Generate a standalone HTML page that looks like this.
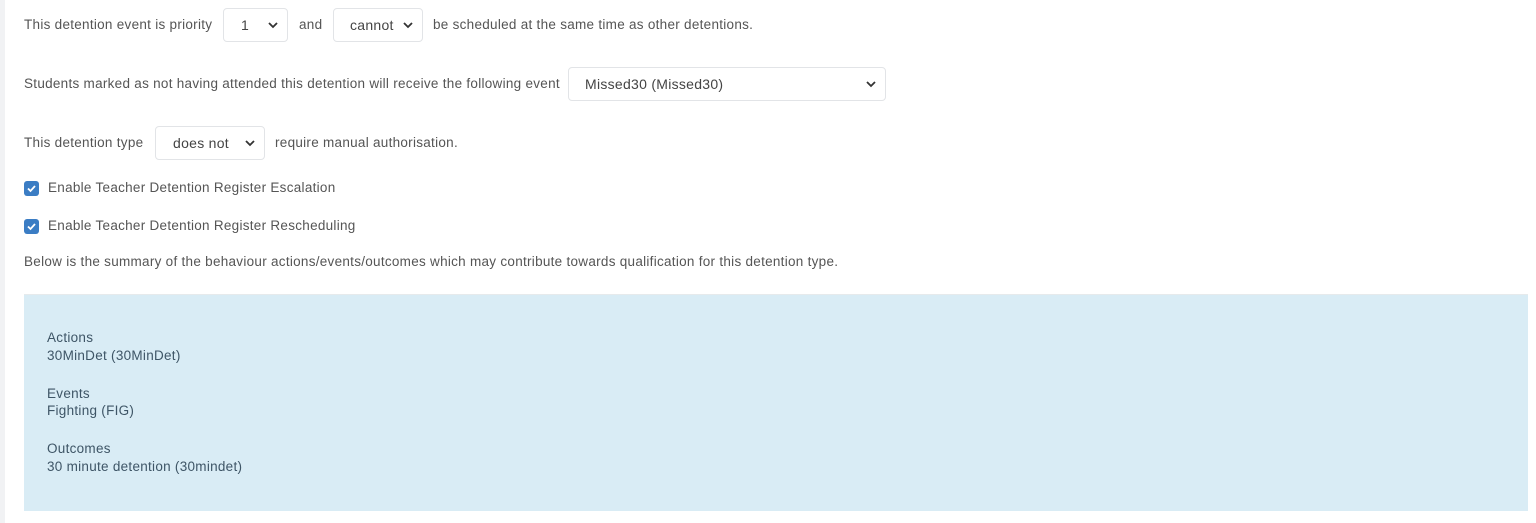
<!DOCTYPE html>
<html><head><style>
body{margin:0;width:1536px;height:523px;background:#fff;font-family:"Liberation Sans",sans-serif;font-size:13.5px;letter-spacing:0.28px;color:#555;position:relative;overflow:hidden}
.strip{position:absolute;left:0;top:0;width:5px;height:523px;background:#f1f2f4}
.t{position:absolute;white-space:nowrap;line-height:16px}
.sel{position:absolute;border:1px solid #e2e4e7;border-radius:4px;background:#fff;box-sizing:border-box;color:#444;font-size:14px}
.sel span{position:absolute;top:50%;transform:translateY(-50%);white-space:nowrap;overflow:hidden}
.sel svg{position:absolute;right:9px;top:50%;margin-top:-4px}
.cb{position:absolute;left:24px;width:15px;height:15px;background:#3b7dc4;border-radius:3px}
.panel{position:absolute;left:24px;top:294px;width:1504px;height:216px;background:#d9ecf5;border-top:1px solid #e6eaec}
.p{position:absolute;left:47px;color:#3e5566;white-space:nowrap;line-height:16px}
</style></head><body>
<div class="strip"></div>
<div class="t" style="left:24px;top:17px">This detention event is priority</div>
<div class="sel" style="left:223px;top:8px;width:65px;height:34px"><span style="left:17px">1</span><svg width="10" height="8" viewBox="0 0 10 8"><path d="M1 2l4 4 4-4" fill="none" stroke="#333" stroke-width="1.8"/></svg></div>
<div class="t" style="left:299px;top:17px">and</div>
<div class="sel" style="left:333px;top:8px;width:90px;height:34px"><span style="left:16px;width:46px">cannot</span><svg width="10" height="8" viewBox="0 0 10 8"><path d="M1 2l4 4 4-4" fill="none" stroke="#333" stroke-width="1.8"/></svg></div>
<div class="t" style="left:433px;top:17px">be scheduled at the same time as other detentions.</div>
<div class="t" style="left:24px;top:76px">Students marked as not having attended this detention will receive the following event</div>
<div class="sel" style="left:568px;top:67px;width:318px;height:34px"><span style="left:16px">Missed30 (Missed30)</span><svg width="10" height="8" viewBox="0 0 10 8"><path d="M1 2l4 4 4-4" fill="none" stroke="#333" stroke-width="1.8"/></svg></div>
<div class="t" style="left:24px;top:135px">This detention type</div>
<div class="sel" style="left:155px;top:126px;width:110px;height:34px"><span style="left:17px">does not</span><svg width="10" height="8" viewBox="0 0 10 8"><path d="M1 2l4 4 4-4" fill="none" stroke="#333" stroke-width="1.8"/></svg></div>
<div class="t" style="left:275px;top:135px">require manual authorisation.</div>
<div class="cb" style="top:181px"><svg width="15" height="15" viewBox="0 0 15 15"><path d="M4 7.5l2.5 2.5 4.5-5" fill="none" stroke="#fff" stroke-width="1.8"/></svg></div>
<div class="t" style="left:48px;top:180px">Enable Teacher Detention Register Escalation</div>
<div class="cb" style="top:219px"><svg width="15" height="15" viewBox="0 0 15 15"><path d="M4 7.5l2.5 2.5 4.5-5" fill="none" stroke="#fff" stroke-width="1.8"/></svg></div>
<div class="t" style="left:48px;top:218px">Enable Teacher Detention Register Rescheduling</div>
<div class="t" style="left:24px;top:254px">Below is the summary of the behaviour actions/events/outcomes which may contribute towards qualification for this detention type.</div>
<div class="panel"></div>
<div class="p" style="top:330px">Actions</div>
<div class="p" style="top:348px">30MinDet (30MinDet)</div>
<div class="p" style="top:386px">Events</div>
<div class="p" style="top:403px">Fighting (FIG)</div>
<div class="p" style="top:441px">Outcomes</div>
<div class="p" style="top:459px">30 minute detention (30mindet)</div>
</body></html>
